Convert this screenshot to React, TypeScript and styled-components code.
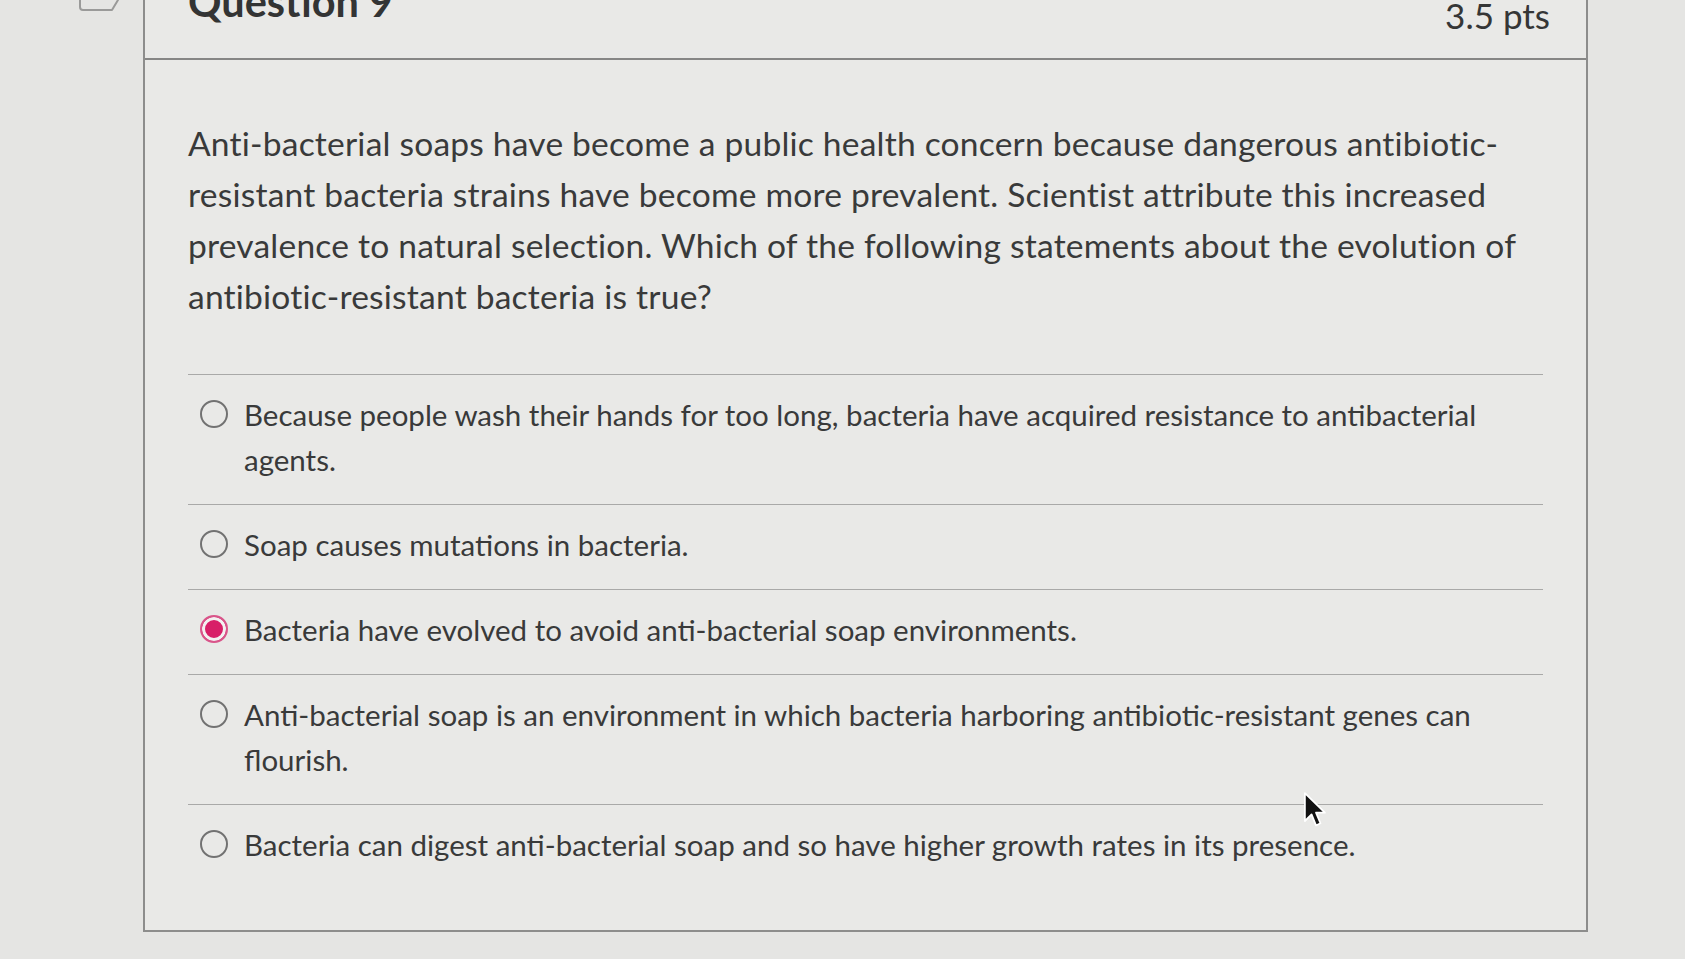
import React from "react";
import styled, { createGlobalStyle } from "styled-components";

const Global = createGlobalStyle`
  html, body {
    margin: 0;
    padding: 0;
    background: #e5e5e3;
    overflow: hidden;
  }
  body {
    font-family: Lato, "Noto Sans", "Liberation Sans", sans-serif;
    color: #393a3a;
  }
`;

const Page = styled.div`
  position: relative;
  width: 1685px;
  height: 959px;
  padding-left: 143px;
  box-sizing: border-box;
  overflow: hidden;
`;

const FlagIcon = styled.svg`
  position: absolute;
  left: 78px;
  top: -3px;
`;

const Card = styled.section`
  width: 1445px;
  margin-top: -22px;
  border: 2px solid #8d8d8c;
  background: #e9e9e7;
  box-sizing: border-box;
`;

const Header = styled.header`
  display: flex;
  justify-content: space-between;
  align-items: flex-start;
  height: 80px;
  box-sizing: border-box;
  padding: 0 36px 0 43px;
  border-bottom: 2px solid #868685;
`;

const Title = styled.h2`
  margin: 1px 0 0;
  font-size: 41.5px;
  line-height: 41px;
  font-weight: 700;
  color: #333434;
`;

const Points = styled.div`
  margin-top: 18px;
  font-size: 35px;
  line-height: 35px;
  color: #353636;
`;

const Body = styled.div`
  padding: 58px 43px 41px 43px;
`;

const QuestionText = styled.p`
  margin: 0;
  font-size: 33.6px;
  line-height: 51px;
  letter-spacing: 0.2px;
  color: #393a3a;
`;

const Answers = styled.div`
  margin-top: 52px;
  display: flex;
  flex-direction: column;
`;

const Answer = styled.label`
  display: flex;
  align-items: flex-start;
  gap: 16px;
  padding: 17px 0 22px 12px;
  border-top: 1px solid #a9a9a8;
  font-size: 29.5px;
  line-height: 45px;
  color: #393a3a;
`;

const Radio = styled.span<{ $checked?: boolean }>`
  flex: 0 0 auto;
  width: 28px;
  height: 28px;
  margin-top: 8px;
  border-radius: 50%;
  box-sizing: border-box;
  border: 2px solid ${(p) => (p.$checked ? "#d9558a" : "#727272")};
  background: ${(p) => (p.$checked ? "#d81f68" : "transparent")};
  box-shadow: ${(p) => (p.$checked ? "inset 0 0 0 3px #f3f1f1" : "none")};
`;

const Cursor = styled.svg`
  position: absolute;
  left: 1302px;
  top: 791px;
`;

const answers = [
  "Because people wash their hands for too long, bacteria have acquired resistance to antibacterial agents.",
  "Soap causes mutations in bacteria.",
  "Bacteria have evolved to avoid anti-bacterial soap environments.",
  "Anti-bacterial soap is an environment in which bacteria harboring antibiotic-resistant genes can flourish.",
  "Bacteria can digest anti-bacterial soap and so have higher growth rates in its presence.",
];

export default function App() {
  return (
    <>
      <Global />
      <Page>
        <FlagIcon width="44" height="16" viewBox="0 0 44 16">
          <path
            d="M2 0 V10 Q2 13 5 13 H34 L40 3 V0"
            fill="none"
            stroke="#9a9a99"
            strokeWidth="2"
            strokeLinejoin="round"
          />
        </FlagIcon>
        <Card>
          <Header>
            <Title>Question 9</Title>
            <Points>3.5 pts</Points>
          </Header>
          <Body>
            <QuestionText>
              Anti-bacterial soaps have become a public health concern because dangerous
              antibiotic-resistant bacteria strains have become more prevalent. Scientist
              attribute this increased prevalence to natural selection. Which of the following
              statements about the evolution of antibiotic-resistant bacteria is true?
            </QuestionText>
            <Answers>
              {answers.map((a, i) => (
                <Answer key={i}>
                  <Radio $checked={i === 2} />
                  <span>{a}</span>
                </Answer>
              ))}
            </Answers>
          </Body>
        </Card>
        <Cursor width="28" height="40" viewBox="0 0 24 36">
          <path
            d="M2 2 L2 27 L8 21 L12 31 L16 29 L12 19.5 L20 19.5 Z"
            fill="#111"
            stroke="#fff"
            strokeWidth="1.6"
            strokeLinejoin="round"
          />
        </Cursor>
      </Page>
    </>
  );
}
